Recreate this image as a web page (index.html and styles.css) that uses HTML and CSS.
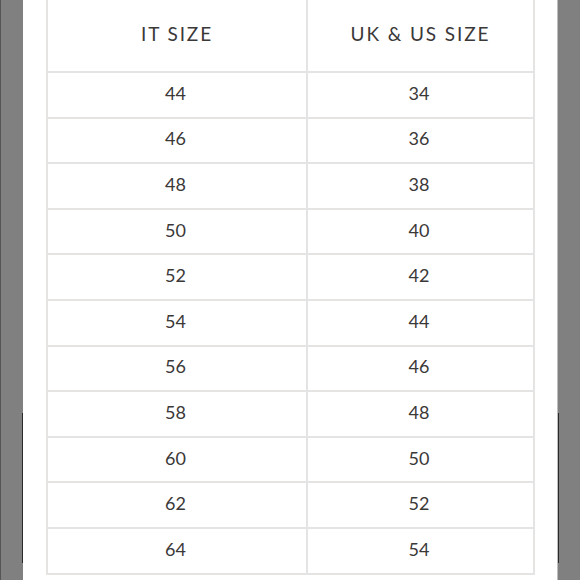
FILE: index.html
```html
<!DOCTYPE html>
<html lang="en">
<head>
<meta charset="utf-8">
<title>Size chart</title>
<link rel="stylesheet" href="styles.css">
</head>
<body>
<div class="frame">
  <div class="edge edge-left"><div class="mark"></div></div>
  <div class="panel">
    <div class="chart">
      <div class="cell head">IT SIZE</div>
      <div class="cell head">UK &amp; US SIZE</div>
      <div class="cell">44</div><div class="cell">34</div>
      <div class="cell">46</div><div class="cell">36</div>
      <div class="cell">48</div><div class="cell">38</div>
      <div class="cell">50</div><div class="cell">40</div>
      <div class="cell">52</div><div class="cell">42</div>
      <div class="cell">54</div><div class="cell">44</div>
      <div class="cell">56</div><div class="cell">46</div>
      <div class="cell">58</div><div class="cell">48</div>
      <div class="cell">60</div><div class="cell">50</div>
      <div class="cell">62</div><div class="cell">52</div>
      <div class="cell">64</div><div class="cell">54</div>
    </div>
  </div>
  <div class="edge edge-right"><div class="mark"></div></div>
</div>
</body>
</html>
```
FILE: styles.css
```css
html, body {
  margin: 0;
  padding: 0;
  background: #808080;
}
body {
  width: 580px;
  height: 580px;
  overflow: hidden;
  font-family: Lato, "Open Sans", sans-serif;
}
.frame {
  display: flex;
  height: 580px;
}
.edge {
  flex: 0 0 auto;
  background: #808080;
  display: flex;
  flex-direction: column;
}
.edge-left {
  width: 23px;
  border-left: 1px solid #555;
  box-sizing: border-box;
  align-items: flex-end;
}
.edge-right {
  flex: 1 1 auto;
  align-items: flex-start;
}
.mark {
  margin-top: 413px;
  height: 150px;
  width: 1px;
  background: #2a2a2a;
}
.panel {
  width: 535px;
  flex: 0 0 535px;
  background: #fff;
  padding-left: 23px;
  box-sizing: border-box;
  border-right: 1px solid #bdbdbd;
}
.chart {
  width: 489px;
  display: grid;
  grid-template-columns: 258px 225px;
  grid-template-rows: 71px repeat(11, 43.6px);
  gap: 2px;
  padding: 0 2px 2px 2px;
  box-sizing: border-box;
  background: #e6e3e3;
}
.cell {
  background: #fff;
  display: flex;
  align-items: center;
  justify-content: center;
  color: #3b3838;
  font-size: 18px;
  padding-bottom: 4px;
  padding-right: 3px;
  box-sizing: border-box;
}
.head {
  font-size: 19px;
  letter-spacing: 1.9px;
  padding-bottom: 5px;
  padding-right: 0;
}
```
